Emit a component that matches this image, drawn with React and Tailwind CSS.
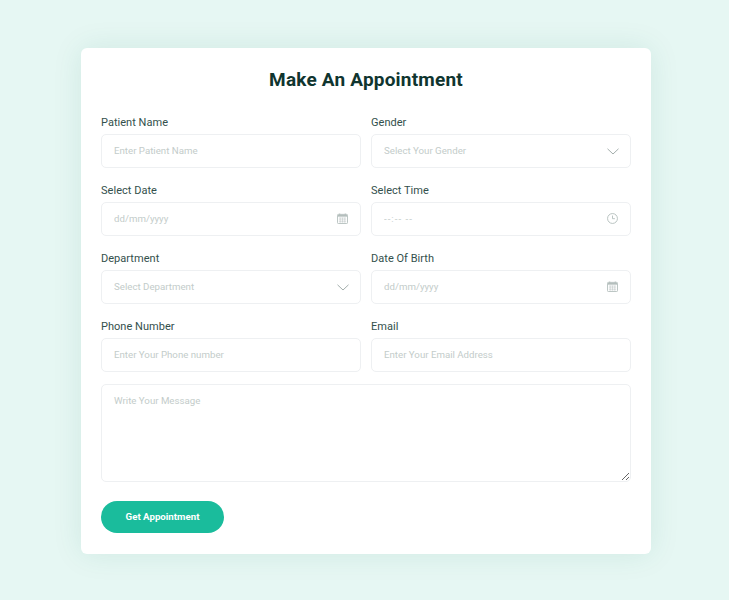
const fieldClass =
  "h-[34px] w-full rounded-[5px] border border-[#eef0f2] bg-white px-3 text-[9.7px] text-[#c3ccca] outline-none placeholder:text-[#c3ccca]";

const labelClass = "mb-[3px] block h-[17px] text-[11px] leading-[17px] tracking-[0.03px] text-[#33504c]";

function CalendarIcon() {
  return (
    <svg width="11" height="11" viewBox="0 0 12 12" className="text-[#b4bebc]">
      <path d="M2.5 0.5h1v2h-1zM8.5 0.5h1v2h-1z" fill="currentColor" />
      <rect x="0.5" y="1.5" width="11" height="10" rx="1" fill="none" stroke="currentColor" />
      <rect x="1" y="2" width="10" height="2" fill="currentColor" />
      <path d="M2 5.5h8M2 7.5h8M2 9.5h8M3.5 5v5.5M6 5v5.5M8.5 5v5.5" stroke="currentColor" strokeWidth="0.5" />
    </svg>
  );
}

function ClockIcon() {
  return (
    <svg width="11" height="11" viewBox="0 0 12 12" fill="none" stroke="currentColor" className="text-[#b4bebc]">
      <circle cx="6" cy="6" r="5.4" />
      <path d="M6 2.8V6.2H8.6" />
    </svg>
  );
}

function Field({ label, placeholder, icon, wide }) {
  return (
    <div>
      <label className={labelClass}>{label}</label>
      <div className="relative">
        <input className={`${fieldClass} pb-[2px] ${wide ? "tracking-[1px]" : ""}`} placeholder={placeholder} />
        {icon && <span className="absolute right-[13px] top-[11px] flex">{icon}</span>}
      </div>
    </div>
  );
}

function SelectField({ label, placeholder }) {
  return (
    <div>
      <label className={labelClass}>{label}</label>
      <div className="relative">
        <select className={`${fieldClass} appearance-none`} defaultValue="">
          <option value="">{placeholder}</option>
        </select>
        <svg
          width="12"
          height="7"
          viewBox="0 0 12 7"
          fill="none"
          stroke="currentColor"
          className="absolute right-3 top-[14px] text-[#a3aeac]"
        >
          <path d="M0.5 0.8L6 6L11.5 0.8" />
        </svg>
      </div>
    </div>
  );
}

export default function App() {
  return (
    <div className="min-h-[600px] bg-[#e6f7f3] pt-[48px] font-['Roboto',sans-serif]">
      <form className="ml-[81px] h-[506px] w-[570px] rounded-[6px] bg-white px-5 pt-[18px] shadow-[0_0_30px_rgba(20,110,90,0.1)]">
        <h2 className="mb-[20px] text-center text-[19px] leading-[28px] font-bold tracking-[0.2px] text-[#10352f]">
          Make An Appointment
        </h2>
        <div className="grid grid-cols-2 gap-x-[10px] gap-y-[14px]">
          <Field label="Patient Name" placeholder="Enter Patient Name" />
          <SelectField label="Gender" placeholder="Select Your Gender" />
          <Field label="Select Date" placeholder="dd/mm/yyyy" icon={<CalendarIcon />} />
          <Field label="Select Time" placeholder="--:-- --" icon={<ClockIcon />} wide />
          <SelectField label="Department" placeholder="Select Department" />
          <Field label="Date Of Birth" placeholder="dd/mm/yyyy" icon={<CalendarIcon />} />
          <Field label="Phone Number" placeholder="Enter Your Phone number" />
          <Field label="Email" placeholder="Enter Your Email Address" />
        </div>
        <textarea
          className="mt-[12px] block h-[98px] w-full rounded-[5px] border border-[#eef0f2] px-3 py-[9px] text-[9.7px] outline-none placeholder:text-[#c3ccca]"
          placeholder="Write Your Message"
        />
        <button
          type="button"
          className="mt-[19px] h-[32px] w-[123px] rounded-full bg-[#1abc9c] text-[9.7px] font-bold text-white"
        >
          Get Appointment
        </button>
      </form>
    </div>
  );
}
